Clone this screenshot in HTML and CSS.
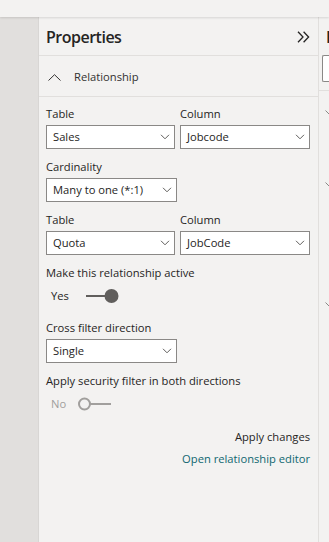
FILE: index.html
```
<!DOCTYPE html>
<html lang="en">
<head>
<meta charset="utf-8">
<title>Properties</title>
<link rel="stylesheet" href="styles.css">
</head>
<body>
<div class="topbar"></div>
<div class="main">
  <div class="leftcol"></div>
  <section class="panel">
    <header class="panel-head">
      <h1 class="panel-title">Properties</h1>
      <svg class="collapse" width="14" height="12" viewBox="0 0 14 12"><polyline points="1,0.8 6,6 1,11.2" fill="none" stroke="#252423" stroke-width="1.3"/><polyline points="6.6,0.8 11.6,6 6.6,11.2" fill="none" stroke="#252423" stroke-width="1.3"/></svg>
    </header>
    <div class="section-head">
      <svg class="caret" width="13" height="7" viewBox="0 0 13 7"><polyline points="0.5,6.5 6.5,0.7 12.5,6.5" fill="none" stroke="#323130" stroke-width="1"/></svg>
      <span>Relationship</span>
    </div>
    <div class="section-body">
      <div class="pair">
        <div class="field">
          <div class="label">Table</div>
          <div class="select"><span>Sales</span><svg width="10" height="6" viewBox="0 0 10 6"><polyline points="1,0.8 5,4.8 9,0.8" fill="none" stroke="#605e5c" stroke-width="1"/></svg></div>
        </div>
        <div class="field">
          <div class="label">Column</div>
          <div class="select"><span>Jobcode</span><svg width="10" height="6" viewBox="0 0 10 6"><polyline points="1,0.8 5,4.8 9,0.8" fill="none" stroke="#605e5c" stroke-width="1"/></svg></div>
        </div>
      </div>
      <div class="field spaced">
        <div class="label">Cardinality</div>
        <div class="select single"><span>Many to one (*:1)</span><svg width="10" height="6" viewBox="0 0 10 6"><polyline points="1,0.8 5,4.8 9,0.8" fill="none" stroke="#605e5c" stroke-width="1"/></svg></div>
      </div>
      <div class="pair spaced">
        <div class="field">
          <div class="label">Table</div>
          <div class="select"><span>Quota</span><svg width="10" height="6" viewBox="0 0 10 6"><polyline points="1,0.8 5,4.8 9,0.8" fill="none" stroke="#605e5c" stroke-width="1"/></svg></div>
        </div>
        <div class="field">
          <div class="label">Column</div>
          <div class="select"><span>JobCode</span><svg width="10" height="6" viewBox="0 0 10 6"><polyline points="1,0.8 5,4.8 9,0.8" fill="none" stroke="#605e5c" stroke-width="1"/></svg></div>
        </div>
      </div>
      <div class="label spaced">Make this relationship active</div>
      <div class="toggle">
        <span class="toggle-text">Yes</span>
        <svg width="44" height="16" viewBox="0 0 44 16"><line x1="10" y1="8" x2="29" y2="8" stroke="#605e5c" stroke-width="2"/><circle cx="35.5" cy="8" r="7" fill="#605e5c"/></svg>
      </div>
      <div class="field after-toggle">
        <div class="label">Cross filter direction</div>
        <div class="select single"><span>Single</span><svg width="10" height="6" viewBox="0 0 10 6"><polyline points="1,0.8 5,4.8 9,0.8" fill="none" stroke="#605e5c" stroke-width="1"/></svg></div>
      </div>
      <div class="label spaced">Apply security filter in both directions</div>
      <div class="toggle off">
        <span class="toggle-text">No</span>
        <svg width="44" height="16" viewBox="0 0 44 16"><circle cx="8.5" cy="8" r="5.5" fill="none" stroke="#a19f9d" stroke-width="2"/><line x1="14" y1="8" x2="35" y2="8" stroke="#a19f9d" stroke-width="2"/></svg>
      </div>
      <div class="actions">
        <span class="action">Apply changes</span>
        <span class="action link">Open relationship editor</span>
      </div>
    </div>
  </section>
  <aside class="strip">
    <div class="strip-head">Fields</div>
    <div class="strip-search"><div class="search-box"></div></div>
    <div class="tree">
      <svg class="tree-chev first" width="8" height="5" viewBox="0 0 8 5"><polyline points="0.5,0.5 4,4 7.5,0.5" fill="none" stroke="#8a8886" stroke-width="1"/></svg>
      <svg class="tree-chev second" width="8" height="5" viewBox="0 0 8 5"><polyline points="0.5,0.5 4,4 7.5,0.5" fill="none" stroke="#8a8886" stroke-width="1"/></svg>
      <svg class="tree-chev third" width="8" height="5" viewBox="0 0 8 5"><polyline points="0.5,0.5 4,4 7.5,0.5" fill="none" stroke="#8a8886" stroke-width="1"/></svg>
    </div>
  </aside>
</div>
</body>
</html>
```
FILE: styles.css
```
html, body {
  margin: 0;
  padding: 0;
}
body {
  width: 329px;
  height: 542px;
  overflow: hidden;
  background: #f3f2f1;
  color: #252423;
  font-family: "Open Sans", "Noto Sans", sans-serif;
  font-size: 11.2px;
  line-height: 16px;
}
.topbar {
  height: 17px;
  background: #f3f2f1;
  box-shadow: 0 1px 2px rgba(0, 0, 0, 0.12);
  position: relative;
  z-index: 1;
}
.main {
  display: flex;
  height: 525px;
}
.leftcol {
  width: 38px;
  flex: none;
  background: #e1dfdd;
  border-right: 1px solid #d8d6d4;
}
.panel {
  width: 279px;
  flex: none;
  background: #f3f2f1;
  border-right: 1px solid #e1dfdd;
  display: flex;
  flex-direction: column;
}
.panel-head {
  height: 39px;
  box-sizing: border-box;
  border-bottom: 1px solid #e1dfdd;
  display: flex;
  align-items: center;
  justify-content: space-between;
  padding: 2px 7px 0 7px;
}
.panel-title {
  margin: 0;
  font-size: 16px;
  font-weight: 600;
  letter-spacing: -0.5px;
  line-height: 20px;
}
.collapse {
  display: block;
}
.section-head {
  height: 41px;
  box-sizing: border-box;
  border-bottom: 1px solid #e1dfdd;
  display: flex;
  align-items: center;
  gap: 13px;
  padding: 2px 0 0 9px;
  color: #323130;
}
.caret {
  display: block;
}
.section-body {
  padding: 7px 8px 0 7px;
}
.pair {
  display: grid;
  grid-template-columns: 129px 130px;
  column-gap: 5px;
}
.spaced {
  margin-top: 8px;
}
.after-toggle {
  margin-top: 10px;
}
.label {
  line-height: 16px;
  padding-top: 2px;
  white-space: nowrap;
}
.field .label {
  margin-bottom: 3px;
}
.select {
  height: 24px;
  box-sizing: border-box;
  border: 1px solid #8a8886;
  background: #ffffff;
  display: flex;
  align-items: center;
  justify-content: space-between;
  padding: 0 4px 0 6px;
  white-space: nowrap;
}
.select svg {
  display: block;
}
.select.single {
  width: 131px;
}
.toggle {
  display: flex;
  align-items: center;
  height: 24px;
  margin-top: 3px;
  padding-left: 5px;
}
.toggle-text {
  width: 25px;
}
.toggle svg {
  display: block;
}
.toggle.off {
  color: #a19f9d;
}
.actions {
  margin-top: 13px;
  display: flex;
  flex-direction: column;
  align-items: flex-end;
  gap: 6px;
}
.action {
  white-space: nowrap;
}
.link {
  color: #0f6770;
}
.strip {
  flex: 1;
  min-width: 0;
  overflow: hidden;
  background: #f3f2f1;
}
.strip-head {
  height: 38px;
  box-sizing: border-box;
  display: flex;
  align-items: center;
  padding: 2px 0 0 7px;
  font-size: 16px;
  font-weight: 600;
  white-space: nowrap;
}
.strip-search {
  padding: 0 0 8px 3px;
  border-bottom: 1px solid #e1dfdd;
}
.search-box {
  height: 27px;
  box-sizing: border-box;
  border: 1px solid #8a8886;
  border-right: none;
  border-radius: 2px 0 0 2px;
  background: #ffffff;
}
.tree {
  display: flex;
  flex-direction: column;
  padding-left: 6px;
}
.tree-chev {
  display: block;
}
.tree-chev.first {
  margin-top: 19px;
}
.tree-chev.second {
  margin-top: 67px;
}
.tree-chev.third {
  margin-top: 115px;
}
```
